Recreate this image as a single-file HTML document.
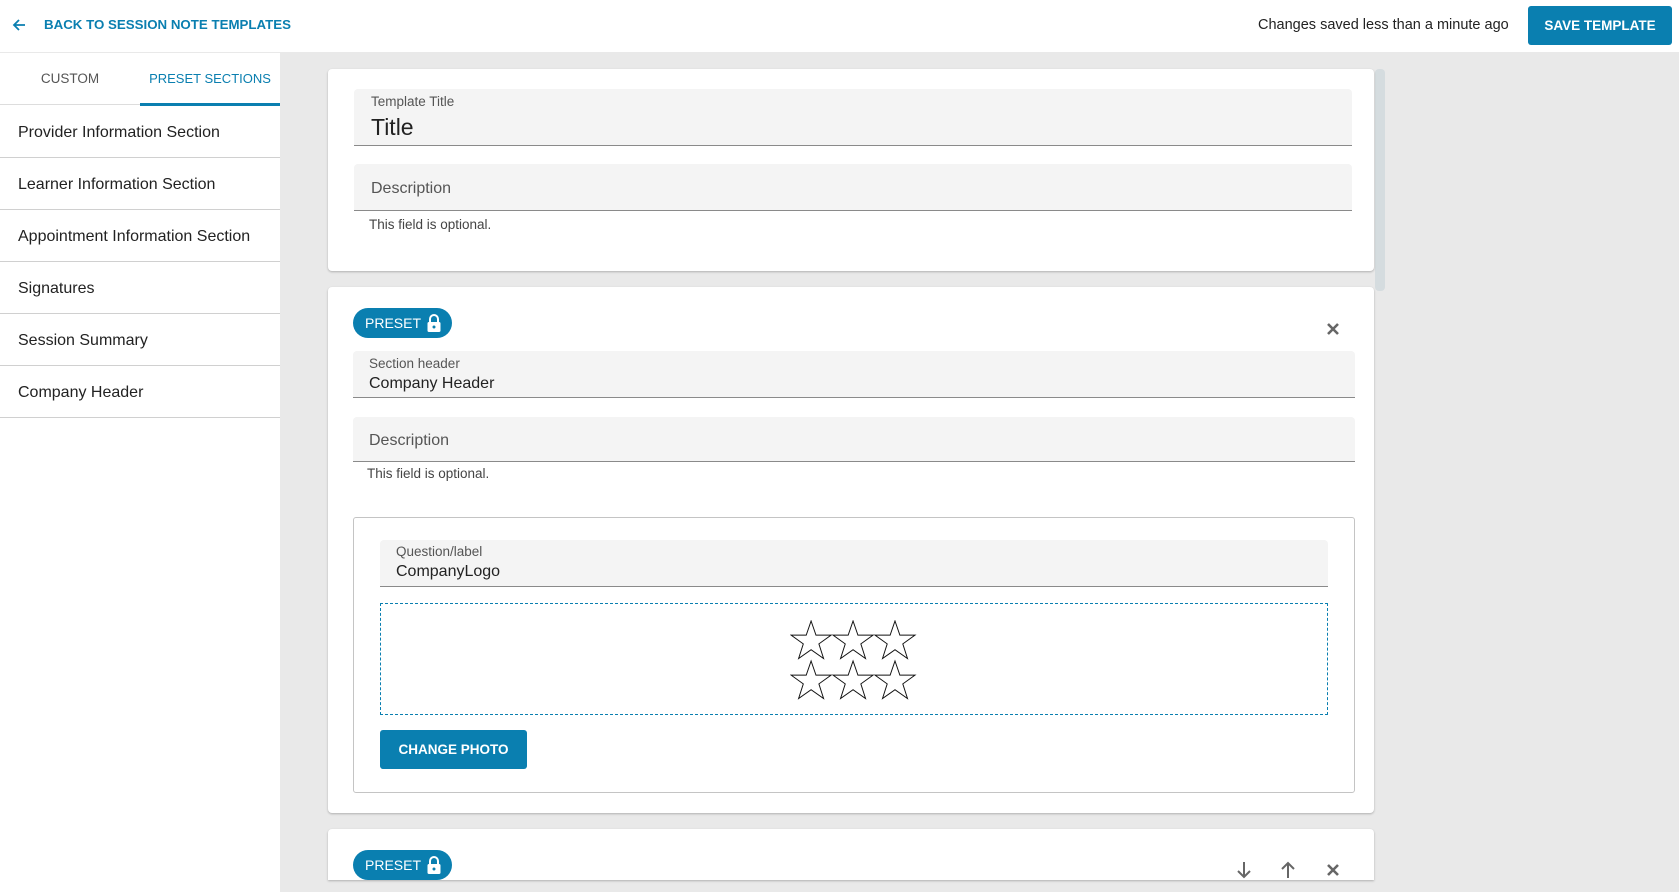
<!DOCTYPE html>
<html><head><meta charset="utf-8"><style>
*{box-sizing:border-box;margin:0;padding:0}
body{width:1679px;height:892px;overflow:hidden;background:#e9e9e9;font-family:"Liberation Sans",sans-serif;color:#222;position:relative}
.abs{position:absolute}
.hdr{left:0;top:0;width:1679px;height:52px;background:#fff}
.blue{color:#0a7fb0}
.side{left:0;top:53px;width:280px;height:839px;background:#fff}
.tab{top:0;height:52px;line-height:52px;font-size:13.5px;text-transform:uppercase;text-align:center;width:140px}
.item{left:0;width:280px;height:52px;border-bottom:1px solid #d0d0d0;padding-left:18px;line-height:54px;font-size:16px;color:#222}
.card{background:#fff;border-radius:4px;box-shadow:0 1px 2px rgba(0,0,0,.25)}
.field{background:#f4f4f4;border-bottom:1px solid #8a8a8a;border-radius:4px 4px 0 0}
.lbl{font-size:13.5px;color:#555}
.help{font-size:13.5px;color:#444}
.pill{background:#0a7fb0;color:#fff;border-radius:16px;font-size:14px;height:30px;line-height:30px;padding-left:12px;width:99px}
.btn{background:#0a7fb0;color:#fff;border-radius:3px;font-size:13.5px;text-align:center;font-weight:bold}
</style></head><body>
<div class="abs hdr"></div>
<svg class="abs" style="left:11px;top:17px" width="16" height="16" viewBox="0 0 16 16"><path d="M14 8H3M8 3L3 8l5 5" stroke="#0a7fb0" stroke-width="1.8" fill="none"/></svg>
<div class="abs blue" style="left:44px;top:17px;font-size:13.3px;font-weight:bold">BACK TO SESSION NOTE TEMPLATES</div>
<div class="abs" style="left:1258px;top:17px;font-size:14.5px;color:#222">Changes saved less than a minute ago</div>
<div class="abs btn" style="left:1528px;top:6px;width:144px;height:39px;line-height:39px">SAVE TEMPLATE</div>

<div class="abs side">
<div class="abs tab" style="left:0;color:#555">Custom</div>
<div class="abs tab blue" style="left:140px;font-size:13px">Preset Sections</div>
<div class="abs" style="left:0;top:51px;width:280px;height:1px;background:#ddd"></div>
<div class="abs" style="left:140px;top:50px;width:140px;height:3px;background:#0a7fb0"></div>
<div class="abs item" style="top:53px">Provider Information Section</div>
<div class="abs item" style="top:105px">Learner Information Section</div>
<div class="abs item" style="top:157px">Appointment Information Section</div>
<div class="abs item" style="top:209px">Signatures</div>
<div class="abs item" style="top:261px">Session Summary</div>
<div class="abs item" style="top:313px">Company Header</div>
</div>

<div class="abs" style="left:1375px;top:69px;width:10px;height:222px;background:#d5dcdf;border-radius:4px"></div>

<div class="abs card" style="left:328px;top:69px;width:1046px;height:202px"></div>
<div class="abs field" style="left:354px;top:89px;width:998px;height:57px"></div>
<div class="abs lbl" style="left:371px;top:94px">Template Title</div>
<div class="abs" style="left:371px;top:114px;font-size:23px;color:#222">Title</div>
<div class="abs field" style="left:354px;top:164px;width:998px;height:47px"></div>
<div class="abs" style="left:371px;top:180px;font-size:16px;color:#555">Description</div>
<div class="abs help" style="left:369px;top:217px">This field is optional.</div>

<div class="abs card" style="left:328px;top:287px;width:1046px;height:526px"></div>
<div class="abs pill" style="left:353px;top:308px">PRESET<svg style="position:absolute;left:73px;top:5px" width="16" height="20" viewBox="0 0 16 20"><path d="M4 9V6a4 4 0 0 1 8 0v3" stroke="#fff" stroke-width="2" fill="none"/><rect x="1.5" y="9" width="13" height="10" rx="1.5" fill="#fff"/><circle cx="8" cy="14" r="1.5" fill="#0a7fb0"/></svg></div>
<svg class="abs" style="left:1326px;top:322px" width="14" height="14" viewBox="0 0 14 14"><path d="M2 2l10 10M12 2L2 12" stroke="#666" stroke-width="2.6"/></svg>
<div class="abs field" style="left:353px;top:351px;width:1002px;height:47px"></div>
<div class="abs lbl" style="left:369px;top:356px">Section header</div>
<div class="abs" style="left:369px;top:375px;font-size:16px">Company Header</div>
<div class="abs field" style="left:353px;top:417px;width:1002px;height:45px"></div>
<div class="abs" style="left:369px;top:432px;font-size:16px;color:#555">Description</div>
<div class="abs help" style="left:367px;top:466px">This field is optional.</div>

<div class="abs" style="left:353px;top:517px;width:1002px;height:276px;border:1px solid #c4c4c4;border-radius:3px;background:#fff"></div>
<div class="abs field" style="left:380px;top:540px;width:948px;height:47px"></div>
<div class="abs lbl" style="left:396px;top:544px">Question/label</div>
<div class="abs" style="left:396px;top:563px;font-size:16px">CompanyLogo</div>
<div class="abs" style="left:380px;top:603px;width:948px;height:112px;border:1px dashed #0a7fb0"></div>
<svg class="abs" style="left:790px;top:620px" width="130" height="80" viewBox="0 0 132 82">
<defs><path id="s" d="M21 1l5 14.5h15.5l-12.5 9 4.8 15L21 30.5 8.2 39.5l4.8-15L0.5 15.5H16z" fill="#fff" stroke="#111" stroke-width="1"/></defs>
<use href="#s" x="0" y="0"/><use href="#s" x="43" y="0"/><use href="#s" x="86" y="0"/>
<use href="#s" x="0" y="41"/><use href="#s" x="43" y="41"/><use href="#s" x="86" y="41"/>
</svg>
<div class="abs btn" style="left:380px;top:730px;width:147px;height:39px;line-height:39px">CHANGE PHOTO</div>

<div class="abs card" style="left:328px;top:829px;width:1046px;height:51px;border-radius:4px 4px 0 0"></div>
<div class="abs pill" style="left:353px;top:850px">PRESET<svg style="position:absolute;left:73px;top:5px" width="16" height="20" viewBox="0 0 16 20"><path d="M4 9V6a4 4 0 0 1 8 0v3" stroke="#fff" stroke-width="2" fill="none"/><rect x="1.5" y="9" width="13" height="10" rx="1.5" fill="#fff"/><circle cx="8" cy="14" r="1.5" fill="#0a7fb0"/></svg></div>
<svg class="abs" style="left:1236px;top:861px" width="16" height="18" viewBox="0 0 16 18"><path d="M8 1v15M2 10l6 6 6-6" stroke="#666" stroke-width="2" fill="none"/></svg>
<svg class="abs" style="left:1280px;top:861px" width="16" height="18" viewBox="0 0 16 18"><path d="M8 17V2M2 8l6-6 6 6" stroke="#666" stroke-width="2" fill="none"/></svg>
<svg class="abs" style="left:1326px;top:863px" width="14" height="14" viewBox="0 0 14 14"><path d="M2 2l10 10M12 2L2 12" stroke="#666" stroke-width="2.6"/></svg>
</body></html>
